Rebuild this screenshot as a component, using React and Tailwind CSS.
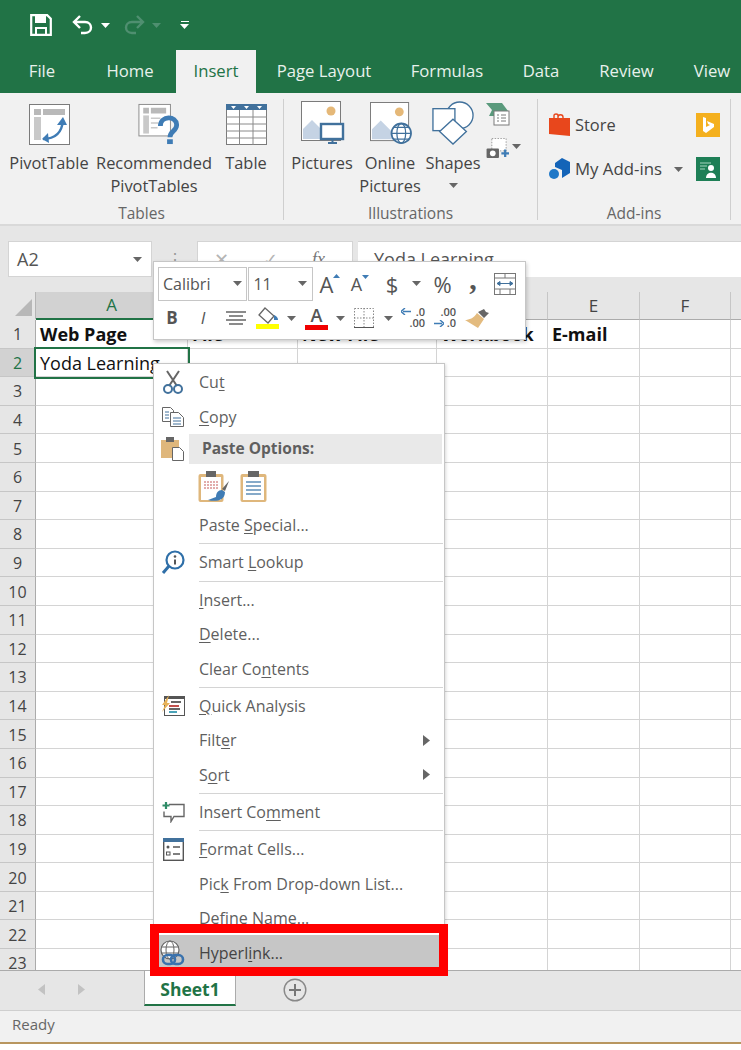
import React from "react";

const tabs = [
  { label: "File", w: "w-[84px]" },
  { label: "Home", w: "w-[92px]" },
  { label: "Insert", w: "w-[80px]", active: true },
  { label: "Page Layout", w: "w-[136px]" },
  { label: "Formulas", w: "w-[110px]" },
  { label: "Data", w: "w-[78px]" },
  { label: "Review", w: "w-[93px]" },
  { label: "View", w: "w-[78px]" },
];

const columns = [
  { name: "A", w: "w-[152px]", selected: true },
  { name: "B", w: "w-[110px]" },
  { name: "C", w: "w-[139px]" },
  { name: "D", w: "w-[111px]" },
  { name: "E", w: "w-[92px]" },
  { name: "F", w: "w-[91px]" },
  { name: "", w: "w-[20px]" },
];

const rows = Array.from({ length: 23 }, (_, i) => i + 1);

const firstRow = ["Web Page", "File", "New File", "Workbook", "E-mail", "", ""];

const Caret = ({ className = "", color = "#666" }) => (
  <svg width="9" height="5" viewBox="0 0 9 5" className={className}>
    <path d="M0 0h9L4.5 5z" fill={color} />
  </svg>
);

/* ribbon icons */
const PivotIcon = () => (
  <svg width="41" height="41" viewBox="0 0 41 41">
    <rect x="0.5" y="0.5" width="40" height="40" fill="#fff" stroke="#7b7b7b" />
    <rect x="5" y="5" width="7" height="6" fill="#b9b9b9" />
    <rect x="14" y="5" width="22" height="6" fill="#b9b9b9" />
    <rect x="5" y="13" width="7" height="23" fill="#c9c9c9" />
    <path d="M14 35c12 0 19-6 20-19" fill="none" stroke="#3f7cb5" strokeWidth="2.4" />
    <path d="M28 21l6-8 4 8zM19 29l-6 6 7 4z" fill="#3f7cb5" />
  </svg>
);

const RecommendedIcon = () => (
  <svg width="41" height="42" viewBox="0 0 42 44">
    <rect x="0.5" y="1.5" width="33" height="33" fill="#fff" stroke="#8a8a8a" />
    <rect x="5" y="5" width="6" height="6" fill="#b9b9b9" />
    <rect x="13" y="5" width="16" height="6" fill="#b9b9b9" />
    <rect x="5" y="13" width="6" height="19" fill="#c9c9c9" />
    <path d="M13 16h10M13 21h8M13 26h7" stroke="#c9c9c9" strokeWidth="1.5" />
    <path d="M23 24c0-11 17-11 17-1 0 7-7 6-7 13" fill="none" stroke="#3f7cb5" strokeWidth="5" />
    <rect x="30" y="38" width="6" height="5" fill="#3f7cb5" />
  </svg>
);

const TableIcon = () => (
  <svg width="41" height="41" viewBox="0 0 41 41">
    <rect x="0.5" y="0.5" width="40" height="40" fill="#fff" stroke="#7b7b7b" />
    <rect x="0" y="0" width="41" height="6" fill="#41719c" />
    <path d="M5 2h5l-2.500 3zM18 2h5l-2.500 3zM31 2h5l-2.500 3z" fill="#fff" />
    <path d="M0 13h41M0 20h41M0 27h41M0 34h41M13.500 6v35M27 6v35" stroke="#8a8a8a" />
  </svg>
);

const PicturesIcon = () => (
  <svg width="44" height="44" viewBox="0 0 44 44">
    <rect x="0.5" y="0.5" width="39" height="39" fill="#fff" stroke="#7b7b7b" />
    <circle cx="30" cy="10" r="4.500" fill="#e5b878" />
    <path d="M2 38V28l9-9 12 12v7z" fill="#c5d3e4" />
    <rect x="20" y="23" width="22" height="15" fill="#fff" stroke="#41719c" strokeWidth="2.400" />
    <path d="M27 42h9M31.500 38v4" stroke="#41719c" strokeWidth="2" />
  </svg>
);

const OnlineIcon = () => (
  <svg width="43" height="43" viewBox="0 0 44 44">
    <rect x="0.500" y="0.500" width="39" height="39" fill="#fff" stroke="#7b7b7b" />
    <circle cx="30" cy="10" r="4.500" fill="#e5b878" />
    <path d="M2 38V28l9-9 12 12v7z" fill="#c5d3e4" />
    <circle cx="32" cy="32" r="10" fill="#fff" stroke="#41719c" strokeWidth="1.800" />
    <ellipse cx="32" cy="32" rx="4.500" ry="10" fill="none" stroke="#41719c" strokeWidth="1.300" />
    <path d="M22 32h20M24 26h16M24 38h16" stroke="#41719c" strokeWidth="1.300" />
  </svg>
);

const ShapesIcon = () => (
  <svg width="42" height="44" viewBox="0 0 44 46">
    <circle cx="29" cy="15" r="14" fill="#fff" stroke="#41719c" strokeWidth="1.400" />
    <rect x="1" y="8" width="23" height="23" fill="#fff" stroke="#41719c" strokeWidth="1.400" />
    <path d="M22 19l14 13-14 13L8 32z" fill="#fff" stroke="#41719c" strokeWidth="1.400" />
  </svg>
);

const SmartArtIcon = () => (
  <svg width="24" height="24" viewBox="0 0 24 24">
    <path d="M0 1h16l6 8H11v5H3l3-6z" fill="#5a9a7c" />
    <rect x="8" y="9" width="15" height="14" fill="#fff" stroke="#7b7b7b" />
    <path d="M11 13h2M15 13h5M11 16h2M15 16h5M11 19h2M15 19h5" stroke="#7b7b7b" />
  </svg>
);

const ScreenshotIcon = () => (
  <svg width="25" height="21" viewBox="0 0 25 22">
    <rect x="5.500" y="0.500" width="15" height="13" fill="#fff" stroke="#999" strokeDasharray="1.500 1.500" />
    <rect x="0" y="11" width="13" height="10" rx="1" fill="#666" />
    <circle cx="6.500" cy="16" r="3" fill="#fff" />
    <path d="M19.500 12v8M15.500 16h8" stroke="#3f7cb5" strokeWidth="2.400" />
  </svg>
);

const StoreIcon = () => (
  <svg width="22" height="24" viewBox="0 0 22 24">
    <path d="M0 5h21v18L0 21z" fill="#e8471c" />
    <path d="M5 6V2.500c0-2 4-2 4 0V6M9 4c0-3 5-3 5 0v2" fill="none" stroke="#e8471c" strokeWidth="1.400" />
  </svg>
);

const AddInsIcon = () => (
  <svg width="22" height="22" viewBox="0 0 22 22">
    <path d="M6 5l7-5 8 4v11l-8 5v-8l-7-3z" fill="#1464b8" />
    <circle cx="5" cy="16" r="5" fill="#1f78c8" />
  </svg>
);

const BingIcon = () => (
  <div className="flex h-[24px] w-[24px] items-center justify-center bg-[#f4b01e]">
    <svg width="12" height="16" viewBox="0 0 12 16">
      <path d="M1 0l3 1v9l4-2-2-1-1-3 7 3v3l-8 6-3-2z" fill="#fff" />
    </svg>
  </div>
);

const PeopleIcon = () => (
  <div className="flex h-[24px] w-[24px] items-center justify-center bg-[#1e7f56]">
    <svg width="18" height="18" viewBox="0 0 18 18">
      <path d="M1 3h11M1 6h7M1 9h5" stroke="#a6d5bf" strokeWidth="1.200" />
      <circle cx="12" cy="8" r="3" fill="#fff" />
      <path d="M7 18c0-7 10-7 10 0z" fill="#fff" />
    </svg>
  </div>
);

/* menu icons */
const CutIcon = () => (
  <svg width="22" height="24" viewBox="0 0 22 24">
    <path d="M5 1l10 15M17 1L7 16" stroke="#666" strokeWidth="2" />
    <circle cx="6" cy="19" r="4" fill="none" stroke="#41719c" strokeWidth="2" />
    <circle cx="16" cy="19" r="4" fill="none" stroke="#41719c" strokeWidth="2" />
  </svg>
);

const CopyIcon = () => (
  <svg width="23" height="20" viewBox="0 0 23 20">
    <path d="M.500.500h8l3 3v11H.500z" fill="#fff" stroke="#666" />
    <path d="M8.500 5.500h8l5 5v9h-13z" fill="#fff" stroke="#666" />
    <path d="M11 11h8M11 14h8M11 17h8M3 5h4M3 8h4M3 11h4" stroke="#41719c" />
  </svg>
);

const PasteIcon = () => (
  <svg width="24" height="25" viewBox="0 0 24 25">
    <rect x="0" y="4" width="18" height="18" fill="#dfb77c" />
    <rect x="5" y="1" width="8" height="5" fill="#666" />
    <path d="M11.500 11.500h7l4 4v9h-11z" fill="#fff" stroke="#666" />
  </svg>
);

const PasteFormatIcon = () => (
  <svg width="31" height="33" viewBox="0 0 31 33">
    <rect x="0.500" y="4" width="25" height="28" rx="2" fill="#dfb77c" />
    <rect x="3" y="7" width="20" height="23" fill="#fff" />
    <path d="M8 1h10v6H8z" fill="#666" />
    <path d="M6 12h14M6 15h14M6 18h14" stroke="#c55a5a" strokeDasharray="2 1" />
    <path d="M31 11l-7 8 3 2z" fill="#666" />
    <path d="M24 20c-4 0-6 3-6 7-3 1-5 2-8 3 7 2 17 1 17-8z" fill="#3f7cb5" />
  </svg>
);

const PasteValuesIcon = () => (
  <svg width="27" height="33" viewBox="0 0 27 33">
    <rect x="0.500" y="4" width="26" height="28" rx="2" fill="#dfb77c" />
    <rect x="3" y="7" width="21" height="23" fill="#fff" />
    <path d="M8 1h11v6H8z" fill="#666" />
    <path d="M6 12h15M6 16h15M6 20h15M6 24h15" stroke="#5f8fb8" strokeWidth="1.400" />
  </svg>
);

const LookupIcon = () => (
  <svg width="24" height="25" viewBox="0 0 24 25">
    <circle cx="14" cy="10" r="8.500" fill="#fff" stroke="#2f6fa8" strokeWidth="2.200" />
    <path d="M8 16l-6 7" stroke="#2f6fa8" strokeWidth="3" />
    <circle cx="14" cy="6.500" r="1.300" fill="#555" />
    <path d="M14 9.500v5" stroke="#555" strokeWidth="2" />
  </svg>
);

const QuickIcon = () => (
  <svg width="23" height="22" viewBox="0 0 23 22">
    <rect x="2.500" y="1.500" width="20" height="19" fill="#fff" stroke="#555" />
    <path d="M2 1h21v3H2z" fill="#555" />
    <path d="M9 7h10" stroke="#666" strokeWidth="2" />
    <path d="M7 11h10" stroke="#c0504d" strokeWidth="2" />
    <path d="M7 14h11" stroke="#666" strokeWidth="2" />
    <path d="M7 17h8" stroke="#4aa3b8" strokeWidth="2" />
    <path d="M7 0L0 10h3l-3 7 8-9H5z" fill="#e7b258" />
  </svg>
);

const CommentIcon = () => (
  <svg width="23" height="21" viewBox="0 0 23 21">
    <path d="M7 2.500h15v12H12l-3 5v-5H2v-5" fill="none" stroke="#666" strokeWidth="1.400" />
    <path d="M4 0v7M.500 3.500h7" stroke="#2e8b67" strokeWidth="2.200" />
  </svg>
);

const FormatIcon = () => (
  <svg width="21" height="23" viewBox="0 0 21 23">
    <rect x="0.700" y="0.700" width="19.600" height="21.600" fill="#fff" stroke="#555" strokeWidth="1.400" />
    <path d="M0 0h21v4H0z" fill="#41719c" />
    <circle cx="5" cy="9" r="1.500" fill="#555" />
    <rect x="3.500" y="14" width="3.500" height="3" fill="none" stroke="#555" />
    <path d="M10 9h7M10 16h7" stroke="#555" strokeWidth="1.400" />
  </svg>
);

const LinkIcon = () => (
  <svg width="26" height="26" viewBox="0 0 26 26">
    <circle cx="10" cy="10" r="9" fill="#fff" stroke="#666" strokeWidth="1.200" />
    <ellipse cx="10" cy="10" rx="4" ry="9" fill="none" stroke="#666" />
    <path d="M1 7h18M1 13h18" stroke="#666" />
    <rect x="3" y="15" width="12" height="9" rx="4.500" fill="none" stroke="#3a72ad" strokeWidth="2.600" />
    <rect x="11" y="15" width="12" height="9" rx="4.500" fill="none" stroke="#3a72ad" strokeWidth="2.600" />
  </svg>
);

/* one context menu row: accel letter is underlined like in the real menu */
const MenuItem = ({ icon, before, accel, after, arrow, hot }) => (
  <div className={`flex h-[34.4px] items-center ${hot ? "bg-[#c6c6c6] text-[#444]" : "text-[#5f5f5f]"}`}>
    <div className="mr-[7px] flex w-[38px] shrink-0 items-center justify-center">{icon}</div>
    <div className="flex-1 whitespace-nowrap text-[16px]">
      {before}
      <u className="underline-offset-2">{accel}</u>
      {after}
    </div>
    {arrow && (
      <svg width="7" height="11" viewBox="0 0 7 11" className="mr-[14px]">
        <path d="M0 0l7 5.500L0 11z" fill="#666" />
      </svg>
    )}
  </div>
);

const MenuSep = () => <div className="my-[1px] ml-[45px] mr-[1px] h-[1px] bg-[#d4d4d4]" />;

const ContextMenu = () => (
  <div className="absolute left-[153px] top-[363px] h-[609px] w-[292px] border border-[#c6c6c6] bg-white pt-[1px] shadow-[1px_1px_3px_rgba(0,0,0,0.15)]">
    <MenuItem icon={<CutIcon />} before="Cu" accel="t" />
    <MenuItem icon={<CopyIcon />} before="" accel="C" after="opy" />
    <div className="flex h-[30px] items-center">
      <div className="flex w-[35px] shrink-0 pl-[7px]"><PasteIcon /></div>
      <div className="mr-[2px] flex h-full flex-1 items-center bg-[#e9e9e9] pl-[13px] text-[15.500px] font-bold text-[#5f5f5f]">
        Paste Options:
      </div>
    </div>
    <div className="flex h-[44px] items-center gap-[11px] pl-[44px] pt-[2px]">
      <PasteFormatIcon />
      <PasteValuesIcon />
    </div>
    <MenuItem before="Paste " accel="S" after="pecial..." />
    <MenuSep />
    <MenuItem icon={<LookupIcon />} before="Smart " accel="L" after="ookup" />
    <MenuSep />
    <MenuItem before="" accel="I" after="nsert..." />
    <MenuItem before="" accel="D" after="elete..." />
    <MenuItem before="Clear Co" accel="n" after="tents" />
    <MenuSep />
    <MenuItem icon={<QuickIcon />} before="" accel="Q" after="uick Analysis" />
    <MenuItem before="Filt" accel="e" after="r" arrow />
    <MenuItem before="S" accel="o" after="rt" arrow />
    <MenuSep />
    <MenuItem icon={<CommentIcon />} before="Insert Co" accel="m" after="ment" />
    <MenuSep />
    <MenuItem icon={<FormatIcon />} before="" accel="F" after="ormat Cells..." />
    <MenuItem before="Pic" accel="k" after=" From Drop-down List..." />
    <MenuItem before="Define Na" accel="m" after="e..." />
    <MenuItem icon={<LinkIcon />} before="Hyperl" accel="i" after="nk..." hot />
  </div>
);

const Slot = ({ w, children }) => (
  <div className={`flex shrink-0 items-center justify-center ${w}`}>{children}</div>
);

const MiniToolbar = () => (
  <div className="absolute left-[153px] top-[261px] flex h-[79px] w-[373px] flex-col border border-[#c6c6c6] bg-white shadow-[1px_2px_4px_rgba(0,0,0,0.2)]">
    <div className="flex h-[39px] items-center pl-[4px] pt-[4px] text-[#555]">
      <div className="flex h-[34px] w-[90px] items-center justify-between border border-[#c6c6c6] pl-[4px] pr-[4px] text-[16px]">
        Calibri <Caret />
      </div>
      <div className="ml-[1px] flex h-[34px] w-[65px] items-center justify-between border border-[#c6c6c6] pl-[4px] pr-[5px] text-[16px]">
        11 <Caret />
      </div>
      <Slot w="w-[30px] ml-[2px]">
        <span className="text-[22px] leading-none">A</span>
        <svg width="7" height="4" viewBox="0 0 7 4" className="mb-[16px]"><path d="M0 4h7L3.500 0z" fill="#3f7cb5" /></svg>
      </Slot>
      <Slot w="w-[30px]">
        <span className="text-[18px] leading-none">A</span>
        <svg width="7" height="4" viewBox="0 0 7 4" className="mb-[14px]"><path d="M0 0h7L3.500 4z" fill="#3f7cb5" /></svg>
      </Slot>
      <Slot w="w-[34px]"><span className="text-[22px] leading-none">$</span></Slot>
      <Slot w="w-[15px]"><Caret /></Slot>
      <Slot w="w-[37px]"><span className="text-[22px] leading-none">%</span></Slot>
      <Slot w="w-[24px]"><span className="mb-[10px] font-['Liberation_Serif',serif] text-[30px] font-bold leading-none">,</span></Slot>
      <Slot w="w-[40px]">
        <svg width="22" height="22" viewBox="0 0 22 22">
          <rect x="0.500" y="0.500" width="21" height="21" fill="#fff" stroke="#777" />
          <path d="M0 5h22M0 16h22M11 0v5M6 16v6M16 16v6" stroke="#777" />
          <path d="M3 10.500h16M3 10.500l3-2v4zM19 10.500l-3-2v4z" stroke="#41719c" fill="#41719c" />
        </svg>
      </Slot>
    </div>
    <div className="flex h-[34px] items-center pl-[2px] text-[#555]">
      <Slot w="w-[32px]"><span className="text-[17px] font-bold">B</span></Slot>
      <Slot w="w-[30px]"><span className="text-[17px] italic">I</span></Slot>
      <Slot w="w-[36px]">
        <svg width="20" height="16" viewBox="0 0 20 16">
          <path d="M0 2h20M3 6h14M0 10h20M3 14h14" stroke="#666" strokeWidth="1.400" />
        </svg>
      </Slot>
      <Slot w="w-[28px]">
        <svg width="24" height="24" viewBox="0 0 24 24">
          <path d="M9 2l9 8-6 7-9-8z" fill="#fff" stroke="#666" strokeWidth="1.300" />
          <path d="M18 9c3 1 4 3 4 5h-4z" fill="#3f7cb5" />
          <rect x="0" y="18" width="23" height="5" fill="#ffff00" />
        </svg>
      </Slot>
      <Slot w="w-[18px]"><Caret /></Slot>
      <Slot w="w-[33px]">
        <div className="flex flex-col items-center">
          <span className="text-[18px] leading-[19px] font-semibold">A</span>
          <div className="h-[5px] w-[23px] bg-[#f00000]" />
        </div>
      </Slot>
      <Slot w="w-[15px]"><Caret /></Slot>
      <Slot w="w-[32px]">
        <svg width="20" height="20" viewBox="0 0 20 20">
          <rect x="0.500" y="0.500" width="19" height="19" fill="none" stroke="#888" strokeDasharray="1.500 1.500" />
          <path d="M10 0v20M0 10h20" stroke="#888" strokeDasharray="1.500 1.500" />
          <path d="M0 19.500h20" stroke="#555" />
        </svg>
      </Slot>
      <Slot w="w-[16px]"><Caret /></Slot>
      <Slot w="w-[34px]">
        <div className="relative flex h-[24px] w-[24px] flex-col items-end text-[11px] font-semibold leading-[11px]">
          <span>.0</span>
          <span>.00</span>
          <svg width="10" height="7" viewBox="0 0 10 7" className="absolute left-0 top-[2px]">
            <path d="M10 3.500H2M4 0L0 3.500 4 7" fill="none" stroke="#3f7cb5" strokeWidth="1.400" />
          </svg>
        </div>
      </Slot>
      <Slot w="w-[30px]">
        <div className="relative flex h-[24px] w-[22px] flex-col items-end text-[11px] font-semibold leading-[11px]">
          <span>.00</span>
          <span>.0</span>
          <svg width="10" height="7" viewBox="0 0 10 7" className="absolute bottom-[3px] left-0">
            <path d="M0 3.500h8M6 0l4 3.500L6 7" fill="none" stroke="#3f7cb5" strokeWidth="1.400" />
          </svg>
        </div>
      </Slot>
      <Slot w="w-[34px]">
        <svg width="24" height="21" viewBox="0 0 24 21">
          <path d="M13 4l6 6 5-5-3-1-2-3z" fill="#666" />
          <path d="M12 5l7 6-6 9-13-8c4 0 9-2 12-7z" fill="#e3bb7f" />
        </svg>
      </Slot>
    </div>
  </div>
);

const RibbonButton = ({ w, icon, children, label2 }) => (
  <div className={`flex shrink-0 flex-col items-center ${w}`}>
    <div className="flex h-[46px] items-end">{icon}</div>
    <div className="mt-[6px] whitespace-nowrap text-[16.400px] leading-[23px] text-[#444]">{children}</div>
    <div className="flex h-[23px] items-center whitespace-nowrap text-[16.400px] leading-[23px] text-[#444]">{label2}</div>
  </div>
);

const RibbonGroup = ({ w, label, children }) => (
  <div className={`flex h-[121px] shrink-0 flex-col border-r border-[#cfcfcf] ${w}`}>
    <div className="flex flex-1">{children}</div>
    <div className="text-center text-[15.500px] leading-[14px] text-[#666]">{label}</div>
  </div>
);

const Ribbon = () => (
  <div className="flex h-[133px] border-b-2 border-[#d9d9d9] bg-[#f1f1f1] pt-[6px]">
    <RibbonGroup w="w-[284px]" label="Tables">
      <RibbonButton w="w-[98px]" icon={<PivotIcon />}>PivotTable</RibbonButton>
      <RibbonButton w="w-[112px]" icon={<div className="pl-[9px]"><RecommendedIcon /></div>} label2="PivotTables">Recommended</RibbonButton>
      <RibbonButton w="w-[72px]" icon={<TableIcon />}>Table</RibbonButton>
    </RibbonGroup>
    <RibbonGroup w="w-[254px]" label="Illustrations">
      <RibbonButton w="w-[76px]" icon={<div className="pl-[2px]"><PicturesIcon /></div>}>Pictures</RibbonButton>
      <RibbonButton w="w-[60px]" icon={<div className="pl-[2px]"><OnlineIcon /></div>} label2="Pictures">Online</RibbonButton>
      <RibbonButton w="w-[66px]" icon={<ShapesIcon />} label2={<Caret />}>Shapes</RibbonButton>
      <div className="flex flex-col pt-[3px]">
        <SmartArtIcon />
        <div className="mt-[12px] flex items-start gap-[1px]">
          <ScreenshotIcon />
          <Caret className="mt-[6px]" />
        </div>
      </div>
    </RibbonGroup>
    <RibbonGroup w="w-[193px]" label="Add-ins">
      <div className="flex flex-1 flex-col pl-[11px] pr-[10px] pt-[14px]">
        <div className="flex h-[24px] items-center justify-between">
          <div className="flex items-center gap-[4px] text-[16.400px] text-[#444]"><StoreIcon /> Store</div>
          <BingIcon />
        </div>
        <div className="mt-[20px] flex h-[24px] items-center justify-between">
          <div className="flex items-center gap-[4px] text-[16.800px] text-[#444]">
            <AddInsIcon /> My Add-ins <Caret className="ml-[8px]" />
          </div>
          <PeopleIcon />
        </div>
      </div>
    </RibbonGroup>
  </div>
);

const FormulaBar = () => (
  <div className="flex h-[51px] items-start bg-[#e6e6e6] pt-[15px]">
    <div className="ml-[8px] flex h-[36px] w-[144px] items-center justify-between border border-[#d4d4d4] bg-white pl-[8px] pr-[9px] text-[18px] text-[#555]">
      A2 <Caret />
    </div>
    <div className="flex h-[36px] w-[45px] items-center justify-center text-[#999]">⋮</div>
    <div className="flex h-[36px] w-[156px] items-center gap-[34px] border border-[#d4d4d4] bg-white pl-[16px] text-[18px] text-[#b5b5b5]">
      <span>✕</span>
      <span>✓</span>
      <span className="font-['Liberation_Serif',serif] italic text-[#777]">fx</span>
    </div>
    <div className="ml-[5px] flex h-[36px] flex-1 items-center border-t border-[#d4d4d4] bg-white pl-[16px] text-[18px] text-[#555]">
      Yoda Learning
    </div>
  </div>
);

const Grid = () => (
  <div className="h-[693px] overflow-hidden bg-white">
    <div className="flex h-[43px] bg-[#e6e6e6] pt-[15px]">
      <div className="flex h-[27px] w-[36px] shrink-0 items-end justify-end border-r border-[#b5b5b5] pb-[3px] pr-[3px]">
        <svg width="17" height="17" viewBox="0 0 17 17"><path d="M17 0v17H0z" fill="#b8b8b8" /></svg>
      </div>
      {columns.map((c) => (
        <div
          key={c.name}
          className={`flex h-[28px] shrink-0 items-center justify-center border-r text-[17px] ${c.w} ${
            c.selected
              ? "border-b-2 border-b-[#217346] border-r-[#b5b5b5] bg-[#d2d2d2] text-[#217346]"
              : "border-b border-b-[#ababab] border-r-[#c6c6c6] text-[#444]"
          }`}
        >
          {c.name}
        </div>
      ))}
    </div>
    {rows.map((r) => (
      <div key={r} className="flex h-[28.600px]">
        <div
          className={`flex w-[36px] shrink-0 items-center justify-center border-b border-r border-b-[#c6c6c6] border-r-[#ababab] pt-[1px] text-[16px] ${
            r === 2 ? "bg-[#d2d2d2] text-[#217346]" : "bg-[#e6e6e6] text-[#444]"
          }`}
        >
          {r}
        </div>
        {columns.map((c, i) => (
          <div
            key={c.name}
            className={`flex shrink-0 items-center whitespace-nowrap border-b border-r border-[#d4d4d4] pl-[4px] pt-[2px] text-[18px] text-[#111] ${c.w} ${
              r === 2 && i === 0 ? "relative outline-2 outline-[#217346]" : ""
            } ${r === 1 ? "font-bold" : ""}`}
          >
            {r === 1 ? firstRow[i] : r === 2 && i === 0 ? "Yoda Learning" : ""}
          </div>
        ))}
      </div>
    ))}
  </div>
);

const SheetBar = () => (
  <div className="flex h-[40px] border-t border-[#ababab] bg-[#e6e6e6]">
    <div className="flex w-[144px] items-center gap-[33px] pb-[2px] pl-[38px]">
      <svg width="7" height="11" viewBox="0 0 7 11"><path d="M7 0L0 5.500 7 11z" fill="#c2c2c2" /></svg>
      <svg width="7" height="11" viewBox="0 0 7 11"><path d="M0 0l7 5.500L0 11z" fill="#c2c2c2" /></svg>
    </div>
    <div className="flex h-[35px] w-[92px] items-center justify-center border-x border-b-2 border-x-[#ababab] border-b-[#217346] bg-white pt-[3px] text-[17.500px] font-bold text-[#217346]">
      Sheet1
    </div>
    <div className="ml-[47px] flex items-center pb-[2px]">
      <svg width="24" height="24" viewBox="0 0 24 24">
        <circle cx="12" cy="12" r="10.800" fill="none" stroke="#888" strokeWidth="1.400" />
        <path d="M12 6v12M6 12h12" stroke="#777" strokeWidth="2" />
      </svg>
    </div>
  </div>
);

export default function App() {
  return (
    <div className="relative h-[1050px] w-[741px] overflow-hidden bg-white font-['Open_Sans',sans-serif]">
      <div className="flex h-[50px] items-center bg-[#217346] pl-[30px]">
        <svg width="22" height="22" viewBox="0 0 22 22">
          <path d="M1.200 1.200h16l3.600 3.600v16H1.200z" fill="none" stroke="#fff" strokeWidth="2.200" />
          <rect x="5" y="2" width="11" height="7" fill="#fff" />
          <path d="M6 20v-6h10v6" fill="none" stroke="#fff" strokeWidth="2" />
        </svg>
        <svg width="23" height="20" viewBox="0 0 23 20" className="ml-[20px]">
          <path d="M8 1L2 7l6 6M2 7h11c8 0 8 11 0 11H9" fill="none" stroke="#fff" strokeWidth="2.400" />
        </svg>
        <Caret color="#fff" className="ml-[6px]" />
        <svg width="23" height="20" viewBox="0 0 23 20" className="ml-[12px]">
          <path d="M15 1l6 6-6 6M21 7H10C2 7 2 18 10 18h4" fill="none" stroke="#4f8f70" strokeWidth="2.400" />
        </svg>
        <Caret color="#4f8f70" className="ml-[7px]" />
        <div className="ml-[19px] flex flex-col items-center gap-[2px]">
          <div className="h-[1.500px] w-[8px] bg-white" />
          <Caret color="#fff" />
        </div>
      </div>
      <div className="flex h-[43px] items-end overflow-hidden bg-[#217346]">
        {tabs.map((t) => (
          <div
            key={t.label}
            className={`flex h-[43px] shrink-0 items-center justify-center pb-[2px] text-[16.700px] ${t.w} ${
              t.active ? "bg-[#f1f1f1] text-[#217346]" : "text-[#e8f1ec]"
            }`}
          >
            {t.label}
          </div>
        ))}
      </div>
      <Ribbon />
      <FormulaBar />
      <Grid />
      <SheetBar />
      <div className="flex h-[32px] items-center border-t border-[#cfcfcf] bg-[#f1f1f1] pb-[4px] pl-[12px] text-[15px] text-[#666]">
        Ready
      </div>
      <div className="h-[2px] bg-[#b8965f]" />

      <MiniToolbar />
      <ContextMenu />
      <div className="absolute left-[150px] top-[924px] h-[52px] w-[298px] border-[9px] border-[#ff0000]" />
    </div>
  );
}
